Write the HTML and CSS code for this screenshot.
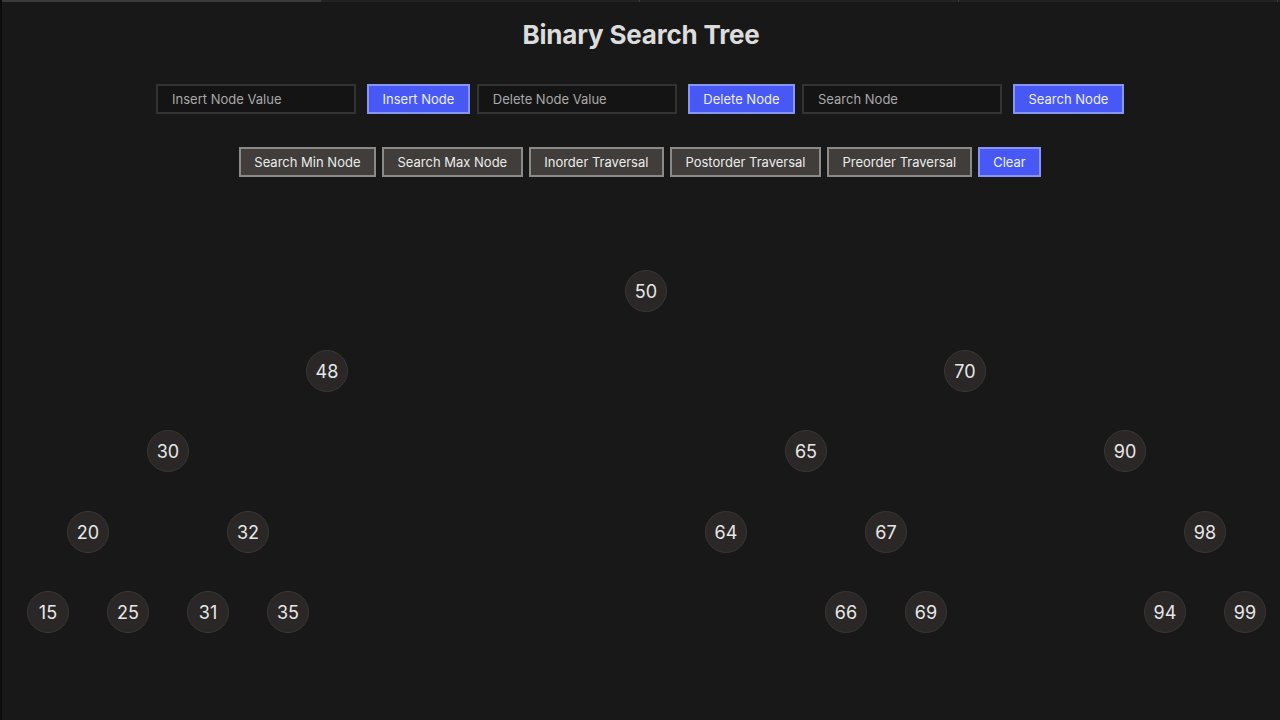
FILE: index.html
```html
<!DOCTYPE html>
<html lang="en">
<head>
<meta charset="utf-8">
<title>Binary Search Tree</title>
<link rel="stylesheet" href="styles.css">
</head>
<body>
<div class="topbar">
  <div class="tab tab-active"></div>
  <div class="tab"></div>
  <div class="tab"></div>
  <div class="tab"></div>
</div>
<main class="page">
  <h1 class="title">Binary Search Tree</h1>
  <div class="controls">
    <input class="field" type="text" placeholder="Insert Node Value">
    <button class="btn btn-primary">Insert Node</button>
    <input class="field" type="text" placeholder="Delete Node Value">
    <button class="btn btn-primary">Delete Node</button>
    <input class="field" type="text" placeholder="Search Node">
    <button class="btn btn-primary">Search Node</button>
  </div>
  <div class="actions">
    <button class="btn btn-secondary">Search Min Node</button>
    <button class="btn btn-secondary">Search Max Node</button>
    <button class="btn btn-secondary">Inorder Traversal</button>
    <button class="btn btn-secondary">Postorder Traversal</button>
    <button class="btn btn-secondary">Preorder Traversal</button>
    <button class="btn btn-primary">Clear</button>
  </div>
  <div class="tree">
    <div class="node" style="left:646px;top:91px">50</div>
    <div class="node" style="left:327px;top:171px">48</div>
    <div class="node" style="left:965px;top:171px">70</div>
    <div class="node" style="left:168px;top:251px">30</div>
    <div class="node" style="left:806px;top:251px">65</div>
    <div class="node" style="left:1125px;top:251px">90</div>
    <div class="node" style="left:88px;top:332px">20</div>
    <div class="node" style="left:248px;top:332px">32</div>
    <div class="node" style="left:726px;top:332px">64</div>
    <div class="node" style="left:886px;top:332px">67</div>
    <div class="node" style="left:1205px;top:332px">98</div>
    <div class="node" style="left:48px;top:412px">15</div>
    <div class="node" style="left:128px;top:412px">25</div>
    <div class="node" style="left:208px;top:412px">31</div>
    <div class="node" style="left:288px;top:412px">35</div>
    <div class="node" style="left:846px;top:412px">66</div>
    <div class="node" style="left:926px;top:412px">69</div>
    <div class="node" style="left:1165px;top:412px">94</div>
    <div class="node" style="left:1245px;top:412px">99</div>
  </div>
</main>
</body>
</html>
```
FILE: styles.css
```css
* { box-sizing: border-box; }
html, body {
  margin: 0;
  padding: 0;
  height: 100%;
}
body {
  background: #181818;
  color: #e4e4e4;
  font-family: "Inter", "Liberation Sans", sans-serif;
  overflow: hidden;
  border-left: 2px solid #0c0c0c;
}
.topbar {
  display: flex;
  height: 2px;
  background: #232323;
}
.tab {
  flex: 0 0 319px;
  border-right: 1px solid #3c3c3c;
}
.tab-active {
  background: #3a3a3a;
}
.page {
  display: flex;
  flex-direction: column;
  align-items: center;
}
.title {
  margin: 17px 0 0;
  font-size: 26px;
  line-height: 32px;
  font-weight: 700;
  color: #dcdcdc;
  letter-spacing: -0.2px;
}
.controls {
  display: flex;
  gap: 7px;
  margin-top: 33px;
  margin-left: -2px;
}
.field {
  width: 200px;
  height: 30px;
  margin-right: 4px;
  background: #141414;
  border: 2px solid #333;
  color: #ddd;
  font-family: inherit;
  font-size: 13px;
  padding: 0 14px;
  outline: none;
}
.field::placeholder {
  color: #a9a9a9;
}
.btn {
  height: 30px;
  padding: 0 13.5px;
  font-family: inherit;
  font-size: 13px;
  cursor: pointer;
}
.btn-primary {
  background: #4758f5;
  border: 2px solid #8796f4;
  color: #eef0ff;
}
.btn-secondary {
  background: #403d3a;
  border: 2px solid #8c8a88;
  color: #ececec;
}
.actions {
  display: flex;
  gap: 6px;
  margin-top: 33px;
  margin-left: -2px;
}
.tree {
  position: relative;
  align-self: stretch;
  height: 500px;
  margin-top: 23px;
  margin-left: -2px;
}
.node {
  position: absolute;
  width: 42px;
  height: 42px;
  margin: -21px 0 0 -21px;
  border-radius: 50%;
  background: #2a2726;
  border: 1px solid #393635;
  display: flex;
  align-items: center;
  justify-content: center;
  font-size: 18px;
  color: #e8e8e8;
}
```
